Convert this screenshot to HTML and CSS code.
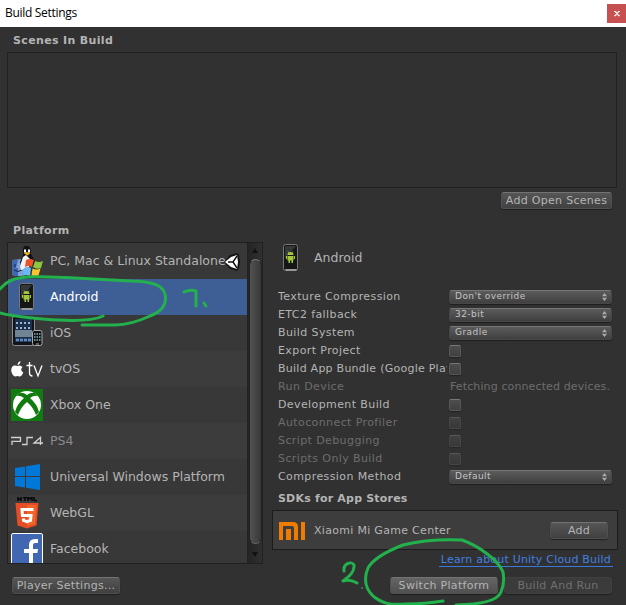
FILE: index.html
```html
<!DOCTYPE html>
<html lang="en">
<head>
<meta charset="utf-8">
<title>Build Settings</title>
<link rel="stylesheet" href="styles.css">
</head>
<body>
<div class="window">
  <header class="titlebar"><span class="title">Build Settings</span><button class="close" aria-label="Close"><svg width="6" height="6" viewBox="0 0 6 6"><path d="M0 .5H2M4 .5H6M1 1.5H5M2 2.5H4M2 3.5H4M1 4.500H5M0 5.500H2M4 5.500H6" transform="scale(1 .85)" stroke="#fff"/></svg></button></header>
  <h2 class="heading scenes-title">Scenes In Build</h2>
  <div class="scenes"></div>
  <div class="scene-actions"><button class="btn add-scenes">Add Open Scenes</button></div>
  <main class="columns">
    <section class="left">
      <h2 class="heading platform-title">Platform</h2>
      <div class="platforms">
        <ul class="list">
          <li><svg class="icon" viewBox="0 0 32 32"><path d="M1 15l10-1 2 1v14l-2 2H3l-2-2z" fill="#7fa2da"/><path d="M1 15h6l-2 8h2v8H3l-2-2z" fill="#4468ae"/><path d="M4 19v3M10 19v3M3 25q4 3 8 0" fill="none" stroke="#15264e"/><path d="M12 10C11 3 13 0 16 1c4 0 4 5 4 8l4 7-2 5H10l-1-4z" fill="#101214"/><path d="M12 12l3-2 4 4-1 8-8 3-1-4z" fill="#f4f4f4"/><path d="M13 4.500h2v3h-2zM17 4.500h2v3h-2z" fill="#fff"/><path d="M12.500 8l3-1 4 1-3 2.500z" fill="#f6b21b"/><path d="M15 15q4-2 8 0l-2 7q-3-2-7 0z" fill="#e9542a"/><path d="M24 16q4 2 8 0l-2 7q-4 2-8-1z" fill="#8cc63c"/><path d="M13 23q4-2 7 0l-1 8q-4-2-7 0z" fill="#69baf2"/><path d="M21.500 23.500q4 2 8 0l-2 7q-4 2-7 0z" fill="#fac62b"/></svg><span>PC, Mac &amp; Linux Standalone</span><svg class="unity" viewBox="0 0 16 18"><path d="M0 9l6-7 7-2 2 2 1 7-1 6-2 3-7-2z" fill="#151515"/><path d="M1 9l6-5 6-2 1 7-1 7-6-2z" fill="#fff"/><path d="M4 9h5l4-6M9 9l4 6" fill="none" stroke="#111" stroke-width="1.400"/></svg></li>
          <li class="selected"><svg class="icon" viewBox="0 0 32 32"><rect x="8.500" y="2.500" width="14" height="26" rx="2" fill="#151717" stroke="#777"/><path d="M10 27h12l-1 2H11z" fill="#999"/><path d="M10 4h11L10 17z" fill="#343838"/><path d="M12.500 13a3 3 0 0 1 6 0zM12.500 14h6v4.500h-6zM11 14h1v3h-1zM19 14h1v3h-1zM13.500 18h1.500v3h-1.500zM16.500 18H18v3h-1.500z" fill="#a4c639"/><path d="M13 9.500l1 1.500M18 9.500l-1 1.500" stroke="#a4c639" stroke-width=".7"/></svg><span>Android</span></li>
          <li><svg class="icon" viewBox="0 0 32 32"><rect x="1.500" y="-.5" width="22" height="29" rx="2" fill="#111318" stroke="#8a8c90"/><rect x="4" y="2" width="17" height="23" fill="#1b304e"/><path d="M4 13h17v7H4z" fill="#708496"/><path d="M5 6h16M5 11h16" stroke="#9db4c7" stroke-width="2" stroke-dasharray="2 2"/><path d="M5 23h16" stroke="#608bbd" stroke-width="2.500" stroke-dasharray="3 1"/><rect x="21.500" y="13.500" width="9.500" height="15" rx="2" fill="#111" stroke="#aaa"/><path d="M23 17h7M23 20h7M23 23h7" stroke="#80b2c0" stroke-width="1.500" stroke-dasharray="1.500 1"/><path d="M25 27h3" stroke="#aaa"/></svg><span>iOS</span></li>
          <li><svg class="icon" viewBox="0 0 32 32"><path d="M6.500 11q0-3 3-4 0 3-3 4M6.500 12Q9 10.500 11.500 13q-3 3 .8 5.500-1.800 4.500-4 4l-2-.5-2 .5Q1.500 22 .2 17q0-6 4.300-5.500z" transform="translate(0 1)" fill="#fff"/><path d="M18.500 9v11q0 3 3 3M15.500 12.500h6M23 12.500l4 10.500 4-10.500" fill="none" stroke="#fff" stroke-width="1.300"/></svg><span>tvOS</span></li>
          <li><svg class="icon" viewBox="0 0 32 32"><path fill="#107c10" d="M0 0h32v32H0z"/><circle cx="16" cy="16" r="14" fill="#fff"/><path d="M8 4q4-1 8 2 4-3 8-2l3 3q-4-1-8 2 7 6 9 14l-3 3q-3-8-9-13-6 5-9 13l-3-3q2-8 9-14-4-3-8-2z" fill="#107c10"/></svg><span>Xbox One</span></li>
          <li class="disabled"><svg class="icon" viewBox="0 0 32 32"><path d="M0 12.500h9.500v3.800H1V20M22 12.500h-6v7H11M29.500 20v-7.500L23 18h9" fill="none" stroke="#d0d0d0" stroke-width="1.300"/></svg><span>PS4</span></li>
          <li><svg class="icon" viewBox="0 0 32 32"><path d="M4 7l10-1.500V15H4zM15 5.300L29 3v12H15zM4 16h10v10.500L4 25zM15 16h14v13l-14-2.200z" fill="#0078d7"/></svg><span>Universal Windows Platform</span></li>
          <li><svg class="icon" viewBox="0 0 32 32"><path d="M7 0v4M7 2h3M10 0v4M12 .5h4M14 0v4M17 4V0l2 2 2-2v4M23 0v3.500h3" fill="none" stroke="#070707" stroke-width="1.500"/><path d="M4.500 6h23l-2 22.500-9.500 3-9.500-3z" fill="#e44d26"/><path d="M16 8h9.500l-1.700 19-7.800 2.300z" fill="#f16529"/><path d="M22.500 12.500H11l.4 6H20l-.5 5-3.500 1.200-3.500-1.200-.2-2" fill="none" stroke="#fff" stroke-width="3"/></svg><span>WebGL</span></li>
          <li><svg class="icon" viewBox="0 0 32 32"><rect x=".5" y=".5" width="31" height="34" rx="1.500" fill="#4267b2" stroke="#fff"/><path d="M18 32V20h-5v-4h5v-4q0-6 6-6h3v4h-3q-2 0-2 2v4h5l-.6 4H22v12z" fill="#fff"/></svg><span>Facebook</span></li>
        </ul>
        <div class="scrollbar"><i class="up"></i><div class="thumb"></div><i class="down"></i></div>
      </div>
    </section>
    <section class="right">
      <div class="target"><svg class="icon" viewBox="0 0 32 32"><rect x="8.500" y="2.500" width="14" height="26" rx="2" fill="#151717" stroke="#777"/><path d="M10 27h12l-1 2H11z" fill="#999"/><path d="M10 4h11L10 17z" fill="#343838"/><path d="M12.500 13a3 3 0 0 1 6 0zM12.500 14h6v4.500h-6zM11 14h1v3h-1zM19 14h1v3h-1zM13.500 18h1.500v3h-1.500zM16.500 18H18v3h-1.500z" fill="#a4c639"/><path d="M13 9.500l1 1.500M18 9.500l-1 1.500" stroke="#a4c639" stroke-width=".7"/></svg><span>Android</span></div>
      <div class="options">
        <div class="row"><label>Texture Compression</label><div class="select">Don't override<i></i></div></div>
        <div class="row"><label>ETC2 fallback</label><div class="select">32-bit<i></i></div></div>
        <div class="row"><label>Build System</label><div class="select">Gradle<i></i></div></div>
        <div class="row"><label>Export Project</label><div class="check"></div></div>
        <div class="row"><label class="long">Build App Bundle (Google Play)</label><div class="check"></div></div>
        <div class="row off"><label>Run Device</label><span class="value">Fetching connected devices.</span></div>
        <div class="row"><label>Development Build</label><div class="check"></div></div>
        <div class="row off"><label>Autoconnect Profiler</label><div class="check"></div></div>
        <div class="row off"><label>Script Debugging</label><div class="check"></div></div>
        <div class="row off"><label>Scripts Only Build</label><div class="check"></div></div>
        <div class="row"><label>Compression Method</label><div class="select">Default<i></i></div></div>
      </div>
      <h2 class="heading sdk-title">SDKs for App Stores</h2>
      <div class="sdk"><svg class="mi" viewBox="0 0 26 18"><path d="M0 0h14q5 0 5 5v13h-4V6q0-2-2-2H4v14H0zM7 7h5v11H7zM22 0h4v18h-4z" fill="#ef7b00"/></svg><span>Xiaomi Mi Game Center</span><button class="btn add">Add</button></div>
      <div class="cloud"><a>Learn about Unity Cloud Build</a></div>
    </section>
  </main>
  <footer class="actions"><button class="btn player">Player Settings...</button><button class="btn switch">Switch Platform</button><button class="btn run off">Build And Run</button></footer>
  <svg class="marks" viewBox="0 0 626 605"><path d="M0 289Q5 283 12 280C25 275 49 277 75 278L130 281C151 281 163 285 165 294C167 303 163 311 150 316C137 322 126 325 115 325H82M0 313C14 317 25 317 43 319C66 321 91 322 103 316M184 292Q190 289 196 291V306M204 303L206 306M344 571C343 563 352 561 354 565Q355 573 343 581Q350 579 357 583M503 572C498 560 479 546 462 540C437 539 415 542 403 545C385 552 373 559 368 568C363 580 366 589 373 596C383 604 390 605 405 604Q425 604 443 601M456 605C479 604 497 602 501 592Q505 583 503 572"/><circle cx="362" cy="588" r=".4" stroke-width="1"/></svg>
</div>
</body>
</html>
```

FILE: styles.css
```css
* { box-sizing: border-box; }
body { margin: 0; }
.window {
  position: relative;
  width: 626px;
  height: 605px;
  overflow: hidden;
  background: #313131;
  color: #b4b4b4;
  font: 11px/18px "DejaVu Sans", sans-serif;
  letter-spacing: .3px;
}
.titlebar {
  display: flex;
  justify-content: space-between;
  height: 27px;
  padding: 4px 0 0 5px;
  background: #fff;
  color: #000;
  font: 12px/17px "Open Sans", sans-serif;
  letter-spacing: -.3px;
}
.close {
  display: flex;
  align-items: center;
  justify-content: center;
  width: 19px;
  height: 19px;
  padding: 0;
  border: 0;
  background: #c75050;
}
.heading { margin: 0; font-size: 11px; line-height: 18px; font-weight: bold; letter-spacing: .35px; }
.scenes-title { margin: 5px 0 2px 13px; }
.scenes { height: 136px; margin: 0 9px 0 7px; border: 1px solid #202020; }
.scene-actions { display: flex; justify-content: flex-end; padding: 4px 14px 0 0; }
.btn {
  height: 17px;
  padding: 0;
  border: 1px solid #505050;
  border-top-color: #737373;
  border-radius: 3px;
  background: linear-gradient(#565656, #404040);
  box-shadow: 0 1px 1px #202020;
  color: #b4b4b4;
  font: inherit;
  line-height: 14px;
  letter-spacing: .3px;
  white-space: nowrap;
}
.add-scenes { width: 111px; }
.columns { display: flex; gap: 9px; height: 362px; padding: 12px 8px 0 7px; }
.left { width: 256px; }
.platform-title { padding-top: 1px; margin-left: 6px; }
.platforms { display: flex; height: 322px; margin-top: 2px; border: 1px solid #202020; }
.list { flex: 1; overflow: hidden; margin: 0; padding: 0; list-style: none; font-size: 12.5px; letter-spacing: 0; }
.list li { display: flex; align-items: center; height: 36px; padding-left: 3px; background: #383838; white-space: nowrap; }
.list li:nth-child(even) { background: #3c3c3c; }
.list li.selected { background: #3e5f96; color: #fff; }
.list .disabled span { opacity: .65; }
.icon { flex: none; width: 32px; height: 32px; margin-right: 7px; }
.unity { flex: none; width: 16px; height: 18px; margin: 2px 0 0 -2px; }
.scrollbar {
  display: flex;
  flex-direction: column;
  align-items: center;
  width: 15px;
  border-left: 1px solid #222;
  background: linear-gradient(90deg, #242424, #303030);
}
.thumb { width: 13px; height: 285px; border: 1px solid #222; border-top-color: #777; border-bottom-color: #666; border-radius: 7px; background: linear-gradient(90deg, #525252, #383838); }
.up, .down { width: 0; height: 0; border: 3px solid transparent; }
.up { margin: 2px 0 6px; border-bottom: 5px solid #111; }
.down { margin-top: 8px; border-top: 5px solid #111; }
.right { width: 346px; }
.target { display: flex; align-items: center; height: 36px; margin: 19px 0 12px 3px; font-size: 12.5px; letter-spacing: 0; }
.options { padding-left: 6px; }
.row { display: flex; align-items: center; height: 18px; }
.row label { width: 169px; margin-right: 2px; overflow: hidden; white-space: nowrap; letter-spacing: .4px; }
.row .long { letter-spacing: .25px; }
.off, .row.off { color: #6d6d6d; }
.select {
  display: flex;
  align-items: center;
  justify-content: space-between;
  width: 163px;
  height: 14px;
  padding: 0 4px 2px 5px;
  border: 1px solid #474747;
  border-top-color: #777;
  border-radius: 3px;
  background: linear-gradient(#5b5b5b, #404040);
  box-shadow: 0 1px 1px #202020;
  color: #c4c4c4;
  font-size: 9px;
  line-height: 12px;
  letter-spacing: .45px;
}
.select i {
  width: 5px;
  height: 8px;
  margin-top: 2px;
  background: #aaa;
  clip-path: polygon(50% 0, 100% 40%, 0 40%, 0 60%, 100% 60%, 50% 100%, 0 60%, 0 40%);
}
.check { width: 12px; height: 12px; border: 1px solid #585858; border-top-color: #777; border-radius: 2px; background: linear-gradient(#4d4d4d, #404040); box-shadow: 0 1px 1px #222; }
.off .check { opacity: .55; }
.value { margin-left: 1px; white-space: nowrap; letter-spacing: .12px; }
.sdk-title { margin: 4px 0 2px 6px; letter-spacing: .2px; }
.sdk { display: flex; align-items: center; height: 40px; padding: 1px 9px 0 6px; border: 1px solid #1c1c1c; background: #3d3d3d; }
.mi { width: 26px; height: 18px; margin-right: 9px; }
.add { width: 58px; margin-left: auto; }
.cloud { display: flex; justify-content: flex-end; padding-right: 5px; color: #4180e0; letter-spacing: .2px; }
.cloud a { height: 17px; padding: 0 2px; line-height: 19px; border-bottom: 1px solid #3b78da; }
.actions { display: flex; height: 34px; padding: 6px 14px 0 12px; }
.player, .switch, .run { width: 108px; }
.switch { margin-left: auto; margin-right: 6px; background: linear-gradient(#656565, #505050); }
.btn.off { border-color: #414141; background: #3b3b3b; color: #707070; }
.marks { position: absolute; inset: 0; width: 626px; height: 605px; fill: none; stroke: #22b14c; stroke-width: 3; stroke-linecap: round; stroke-linejoin: round; pointer-events: none; }
```
